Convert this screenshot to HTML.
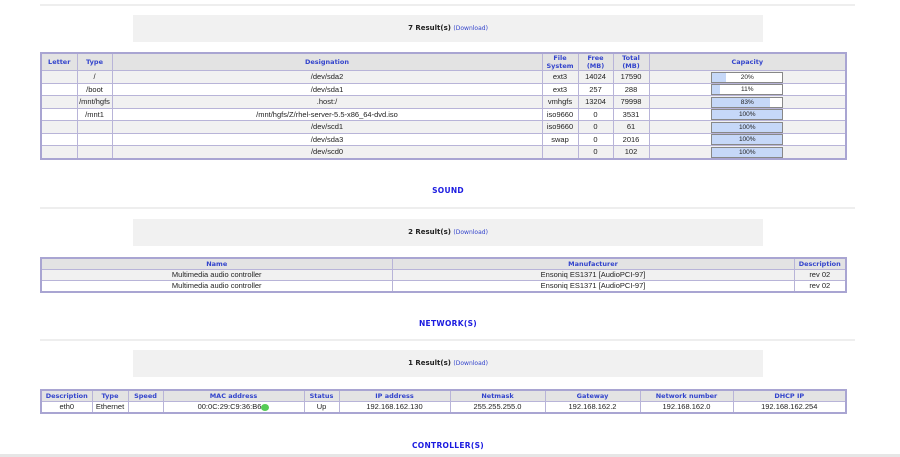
<!DOCTYPE html>
<html><head><style>
body{margin:0;width:900px;height:457px;background:#fff;position:relative;overflow:hidden;font-family:"DejaVu Sans","Liberation Sans",sans-serif;}
.abs{position:absolute;}
.line{position:absolute;left:40px;width:815px;height:2px;background:#eeeeee;}
.bar{position:absolute;left:133px;width:630px;height:27px;background:#f1f1f1;text-align:center;font-size:7px;font-weight:bold;color:#222;line-height:27px;}
.bar a{color:#3344cc;font-weight:normal;font-size:6px;text-decoration:none;}
.title{position:absolute;left:0;width:896px;text-align:center;font-size:7.5px;font-weight:bold;color:#1a1ae0;letter-spacing:0.3px;}
table{position:absolute;left:40px;width:807px;border-collapse:collapse;border:2px solid #a9a5d2;table-layout:fixed;}
td,th{border:1px solid #b8b4d8;font-family:"Liberation Sans",sans-serif;font-size:7.5px;color:#222;text-align:center;padding:0;height:10px;line-height:10px;white-space:nowrap;overflow:hidden;}
table.disk td{height:11px;line-height:11px;}
th{background:#e3e3e3;color:#3344cc;font-family:"DejaVu Sans",sans-serif;font-size:6.5px;font-weight:bold;}
tr.g td{background:#f1f1f1;}
.cap{display:inline-block;width:70px;height:9px;border:1px solid #888;background:#fff;position:relative;vertical-align:middle;line-height:9px;font-size:6.5px;}
.cap i{position:absolute;left:0;top:0;bottom:0;background:#c6d8f8;}
.cap span{position:relative;}
</style></head><body>
<div class="line" style="top:4px"></div>
<div class="bar" style="top:15px">7 Result(s) <a>(Download)</a></div>
<table class="disk" style="top:52px">
<colgroup><col style="width:36px"><col style="width:35px"><col style="width:430px"><col style="width:36px"><col style="width:35px"><col style="width:36px"><col></colgroup>
<tr><th style="height:16px;line-height:8px">Letter</th><th>Type</th><th>Designation</th><th style="line-height:8px">File<br>System</th><th style="line-height:8px">Free<br>(MB)</th><th style="line-height:8px">Total<br>(MB)</th><th>Capacity</th></tr>
<tr class="g"><td></td><td>/</td><td>/dev/sda2</td><td>ext3</td><td>14024</td><td>17590</td><td><div class="cap"><i style="width:20%"></i><span>20%</span></div></td></tr>
<tr><td></td><td>/boot</td><td>/dev/sda1</td><td>ext3</td><td>257</td><td>288</td><td><div class="cap"><i style="width:11%"></i><span>11%</span></div></td></tr>
<tr class="g"><td></td><td>/mnt/hgfs</td><td>.host:/</td><td>vmhgfs</td><td>13204</td><td>79998</td><td><div class="cap"><i style="width:83%"></i><span>83%</span></div></td></tr>
<tr><td></td><td>/mnt1</td><td>/mnt/hgfs/Z/rhel-server-5.5-x86_64-dvd.iso</td><td>iso9660</td><td>0</td><td>3531</td><td><div class="cap"><i style="width:100%"></i><span>100%</span></div></td></tr>
<tr class="g"><td></td><td></td><td>/dev/scd1</td><td>iso9660</td><td>0</td><td>61</td><td><div class="cap"><i style="width:100%"></i><span>100%</span></div></td></tr>
<tr><td></td><td></td><td>/dev/sda3</td><td>swap</td><td>0</td><td>2016</td><td><div class="cap"><i style="width:100%"></i><span>100%</span></div></td></tr>
<tr class="g"><td></td><td></td><td>/dev/scd0</td><td></td><td>0</td><td>102</td><td><div class="cap"><i style="width:100%"></i><span>100%</span></div></td></tr>
</table>
<div class="title" style="top:186px">SOUND</div>
<div class="line" style="top:207px"></div>
<div class="bar" style="top:219px">2 Result(s) <a>(Download)</a></div>
<table style="top:257px">
<colgroup><col style="width:351px"><col style="width:402px"><col></colgroup>
<tr><th style="height:8px;line-height:8px">Name</th><th>Manufacturer</th><th>Description</th></tr>
<tr class="g"><td>Multimedia audio controller</td><td>Ensoniq ES1371 [AudioPCI-97]</td><td>rev 02</td></tr>
<tr><td>Multimedia audio controller</td><td>Ensoniq ES1371 [AudioPCI-97]</td><td>rev 02</td></tr>
</table>
<div class="title" style="top:319px">NETWORK(S)</div>
<div class="line" style="top:339px"></div>
<div class="bar" style="top:350px">1 Result(s) <a>(Download)</a></div>
<table style="top:389px">
<colgroup><col style="width:51px"><col style="width:36px"><col style="width:35px"><col style="width:141px"><col style="width:35px"><col style="width:111px"><col style="width:95px"><col style="width:95px"><col style="width:93px"><col></colgroup>
<tr><th style="height:9px;line-height:9px">Description</th><th>Type</th><th>Speed</th><th>MAC address</th><th>Status</th><th>IP address</th><th>Netmask</th><th>Gateway</th><th>Network number</th><th>DHCP IP</th></tr>
<tr><td>eth0</td><td>Ethernet</td><td></td><td>00:0C:29:C9:36:B6<span style="display:inline-block;width:8px;height:7px;border-radius:50%;background:#5c5;vertical-align:middle"></span></td><td>Up</td><td>192.168.162.130</td><td>255.255.255.0</td><td>192.168.162.2</td><td>192.168.162.0</td><td>192.168.162.254</td></tr>
</table>
<div class="title" style="top:441px">CONTROLLER(S)</div>
<div class="abs" style="left:0;top:454px;width:900px;height:3px;background:#e6e6e6"></div>
</body></html>
